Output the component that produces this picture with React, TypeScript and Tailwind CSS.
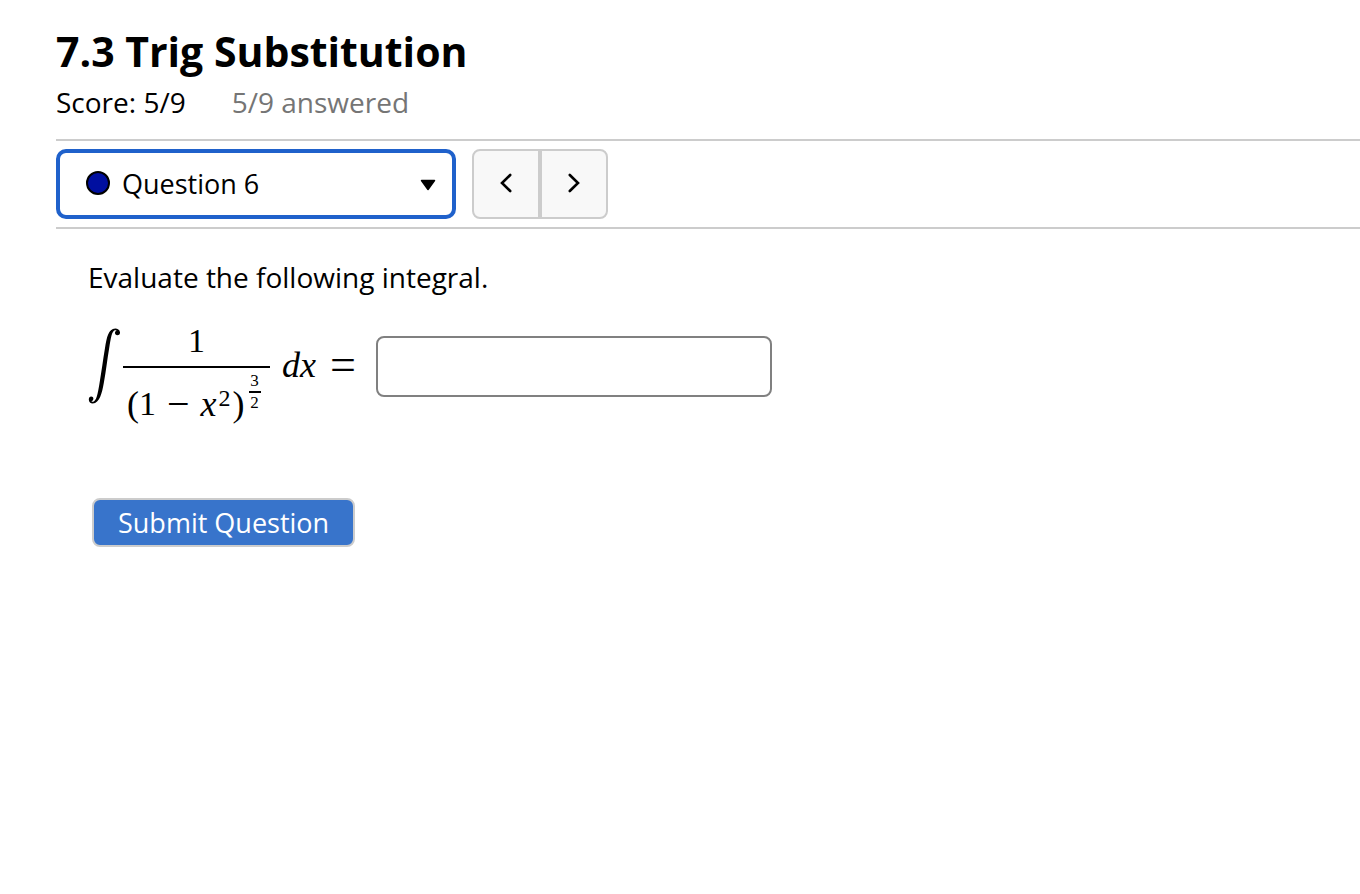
import { useState } from "react";

const uiFont = "font-['Trebuchet_MS','Open_Sans',sans-serif]";
const mathFont = "font-['Liberation_Serif',serif]";

const questions = [1, 2, 3, 4, 5, 6, 7, 8, 9];

function Integral() {
  return (
    <div className={`flex items-center text-black ${mathFont}`} role="math" aria-label="Integral of 1 over (1 - x squared) to the 3 halves, dx">
      <svg className="h-[78px] w-8 shrink-0" viewBox="0 0 32 78" aria-hidden="true">
        <path d="M32 4.2C31.6 2 29.6 0.6 27.2 0.6C20.4 0.6 18.6 10 17 20C15 32 13.6 43 11.4 56C9.8 65.4 8.4 73.8 4.6 73.8C4 73.8 3.6 73.6 3.4 73.4C4.6 73 5.4 72 5.4 70.8C5.4 69.4 4.4 68.6 3.2 68.6C1.8 68.6 0.8 69.8 0.8 71.4C0.8 73.8 2.6 75.4 4.8 75.4C11.6 75.4 14 65 15.8 55C18 43 19.2 32 21.2 20C22.8 10.4 23.8 2.2 27.4 2.2C28 2.2 28.4 2.4 28.6 2.6C27.6 3 27 3.8 27 5C27 6.4 28 7.2 29.4 7.2C31 7.2 32.2 6 32 4.2Z" />
      </svg>
      <div className="ml-[3px] w-[147px]">
        <div className="flex h-[59px] items-end justify-center pb-[7px] text-[34px] leading-[36px]">1</div>
        <div className="h-[2px] bg-black" />
        <div className="flex h-[58px] items-start pl-1">
          <span className="flex items-center pt-[18px] text-[34px] leading-[36px]">
            <span className="text-[36px]">(</span>
            <span>1</span>
            <span className="mx-[11px] text-[40px]">−</span>
            <i className="text-[36px]">x</i>
            <sup className="top-0 ml-[2px] self-start text-[24px] leading-[24px]">2</sup>
            <span className="ml-[2px] text-[36px]">)</span>
          </span>
          <span className="ml-1 mt-1 flex w-3 flex-col items-center text-[17px] leading-[18px]">
            <span className="h-[19px]">3</span>
            <span className="h-[2px] w-full bg-black" />
            <span className="leading-[20px]">2</span>
          </span>
        </div>
      </div>
      <span className="ml-3 pb-1 text-[36px] leading-[36px]">
        <i>dx</i>
      </span>
      <span className="ml-[14px] pb-1 text-[46px] leading-[36px]">=</span>
    </div>
  );
}

export default function App() {
  const [current, setCurrent] = useState(6);
  const [answer, setAnswer] = useState("");

  return (
    <main className={`pl-14 text-[28px] leading-9 text-black ${uiFont}`}>
      <header className="pt-[23px] pb-[19px]">
        <h1 className="text-[41px] leading-[56px] font-bold">7.3 Trig Substitution</h1>
        <p className="mt-[5px] flex gap-[46px]">
          <span>Score: 5/9</span>
          <span className="text-[#757575]">5/9 answered</span>
        </p>
      </header>

      <nav className="flex gap-4 border-y-2 border-[#cccccc] py-2" aria-label="Questions">
        <div className="relative w-[400px]">
          <select
            aria-label="Question"
            value={current}
            onChange={(e) => setCurrent(Number(e.target.value))}
            className="h-[70px] w-full appearance-none rounded-[10px] border-4 border-[#1f61cb] bg-white pr-12 pl-[62px] text-[27px] outline-none"
          >
            {questions.map((n) => (
              <option key={n} value={n}>
                Question {n}
              </option>
            ))}
          </select>
          <span className="pointer-events-none absolute inset-y-0 left-[30px] flex items-center pb-[2px]">
            <span className="size-6 rounded-full border-2 border-black bg-[#000fa0]" />
          </span>
          <span className="pointer-events-none absolute inset-y-0 right-5 flex items-center pt-[2px]">
            <svg className="h-3 w-4" viewBox="0 0 16 12" aria-hidden="true">
              <path d="M1.5 1.5H14.5L8 10.5Z" stroke="#000" strokeWidth="1.5" strokeLinejoin="round" />
            </svg>
          </span>
        </div>
        <div className="flex">
          <button
            type="button"
            aria-label="Previous question"
            onClick={() => setCurrent(Math.max(1, current - 1))}
            className="flex h-[70px] w-[68px] items-center justify-center rounded-l-lg border-2 border-[#cccccc] bg-[#f8f8f8] pb-[2px]"
          >
            <svg className="h-5 w-3" viewBox="0 0 12 20" fill="none" stroke="#000" strokeWidth="2.6" aria-hidden="true">
              <path d="M10.2 2L2 10L10.2 18" strokeLinecap="round" />
            </svg>
          </button>
          <button
            type="button"
            aria-label="Next question"
            onClick={() => setCurrent(Math.min(9, current + 1))}
            className="flex h-[70px] w-[68px] items-center justify-center rounded-r-lg border-2 border-[#cccccc] bg-[#f8f8f8] pb-[2px]"
          >
            <svg className="h-5 w-3" viewBox="0 0 12 20" fill="none" stroke="#000" strokeWidth="2.6" aria-hidden="true">
              <path d="M1.8 2L10 10L1.8 18" strokeLinecap="round" />
            </svg>
          </button>
        </div>
      </nav>

      <form className="pt-[30px] pl-8" onSubmit={(e) => e.preventDefault()}>
        <p>Evaluate the following integral.</p>
        <div className="mt-3 flex items-center gap-5">
          <Integral />
          <input
            aria-label="Answer"
            value={answer}
            onChange={(e) => setAnswer(e.target.value)}
            className="h-[61px] w-[396px] rounded-lg border-2 border-[#808080] bg-white px-3 outline-none"
          />
        </div>
        <button
          type="submit"
          className="mt-[72px] ml-1 h-[49px] rounded-lg border-2 border-[#cccccc] bg-[#3874cb] px-6 text-[27px] text-white"
        >
          Submit Question
        </button>
      </form>
    </main>
  );
}
